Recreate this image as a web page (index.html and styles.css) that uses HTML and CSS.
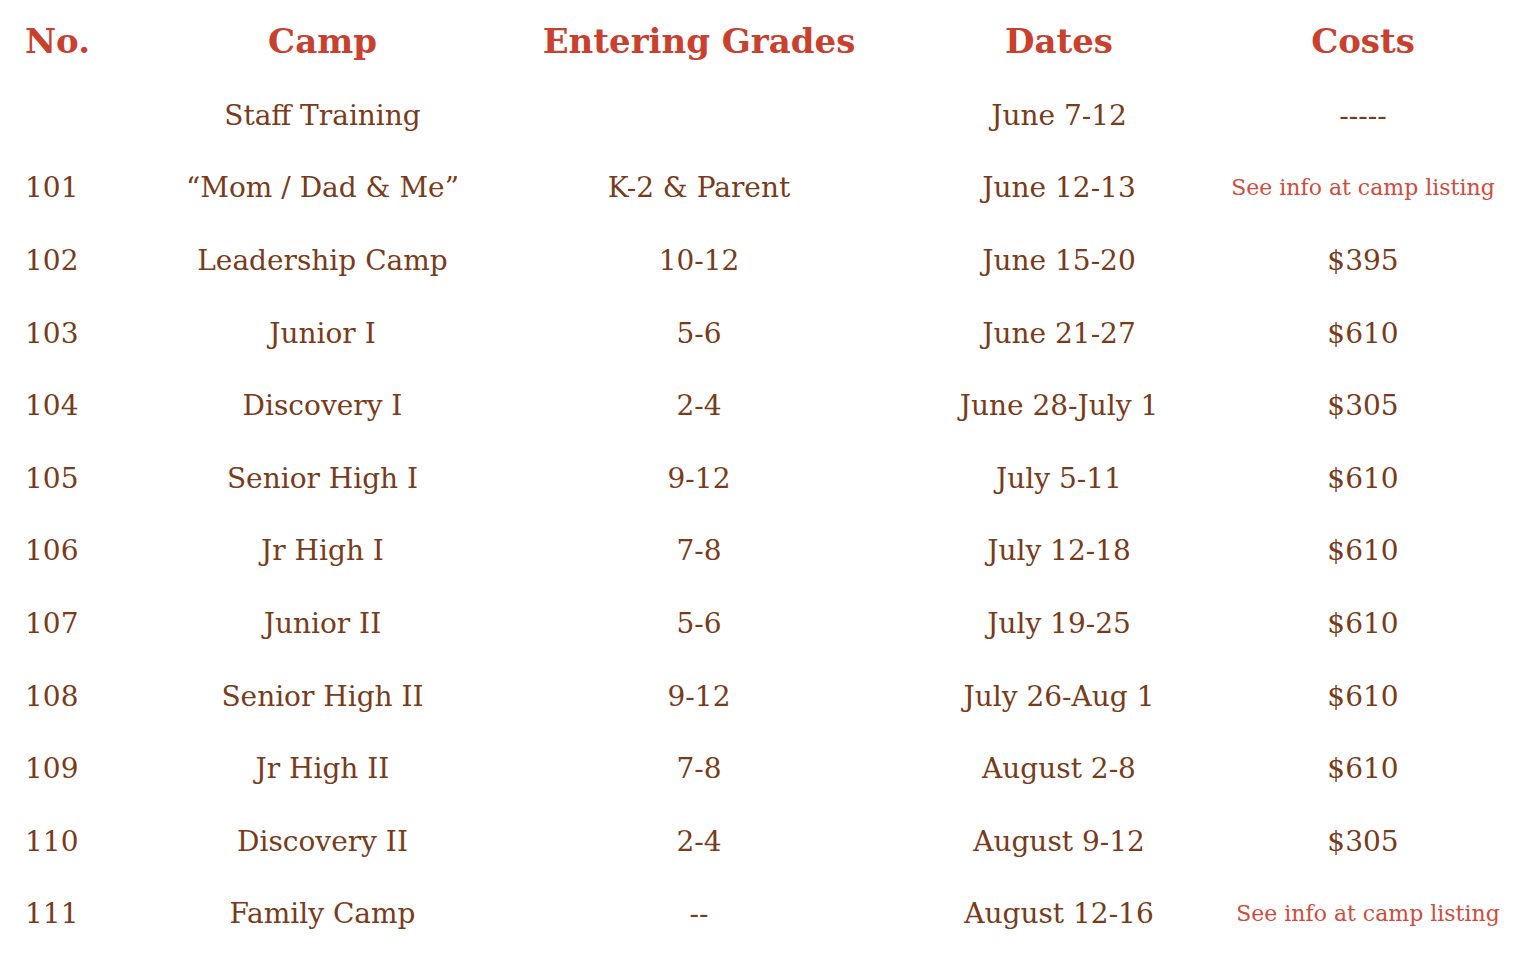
FILE: index.html
```html
<!DOCTYPE html>
<html>
<head>
<meta charset="utf-8">
<link rel="stylesheet" href="styles.css">
</head>
<body>
<div class="table">
  <div class="row head">
    <div class="c no">No.</div><div class="c">Camp</div><div class="c">Entering Grades</div><div class="c">Dates</div><div class="c">Costs</div>
  </div>
  <div class="row">
    <div class="c no"></div><div class="c">Staff Training</div><div class="c"></div><div class="c">June 7-12</div><div class="c">-----</div>
  </div>
  <div class="row">
    <div class="c no">101</div><div class="c">“Mom / Dad &amp; Me”</div><div class="c">K-2 &amp; Parent</div><div class="c">June 12-13</div><div class="c info">See info at camp listing</div>
  </div>
  <div class="row">
    <div class="c no">102</div><div class="c">Leadership Camp</div><div class="c">10-12</div><div class="c">June 15-20</div><div class="c">$395</div>
  </div>
  <div class="row">
    <div class="c no">103</div><div class="c">Junior I</div><div class="c">5-6</div><div class="c">June 21-27</div><div class="c">$610</div>
  </div>
  <div class="row">
    <div class="c no">104</div><div class="c">Discovery I</div><div class="c">2-4</div><div class="c">June 28-July 1</div><div class="c">$305</div>
  </div>
  <div class="row">
    <div class="c no">105</div><div class="c">Senior High I</div><div class="c">9-12</div><div class="c">July 5-11</div><div class="c">$610</div>
  </div>
  <div class="row">
    <div class="c no">106</div><div class="c">Jr High I</div><div class="c">7-8</div><div class="c">July 12-18</div><div class="c">$610</div>
  </div>
  <div class="row">
    <div class="c no">107</div><div class="c">Junior II</div><div class="c">5-6</div><div class="c">July 19-25</div><div class="c">$610</div>
  </div>
  <div class="row">
    <div class="c no">108</div><div class="c">Senior High II</div><div class="c">9-12</div><div class="c">July 26-Aug 1</div><div class="c">$610</div>
  </div>
  <div class="row">
    <div class="c no">109</div><div class="c">Jr High II</div><div class="c">7-8</div><div class="c">August 2-8</div><div class="c">$610</div>
  </div>
  <div class="row">
    <div class="c no">110</div><div class="c">Discovery II</div><div class="c">2-4</div><div class="c">August 9-12</div><div class="c">$305</div>
  </div>
  <div class="row">
    <div class="c no">111</div><div class="c">Family Camp</div><div class="c">--</div><div class="c">August 12-16</div><div class="c info last">See info at camp listing</div>
  </div>
</div>
</body>
</html>
```
FILE: styles.css
```css
html, body {
  margin: 0;
  padding: 0;
  background: #ffffff;
}
body {
  font-family: "DejaVu Serif", "Liberation Serif", serif;
  color: #7a3b1a;
  width: 1536px;
  height: 969px;
  overflow: hidden;
}
.table {
  display: flex;
  flex-direction: column;
  padding-top: 5px;
}
.row {
  display: grid;
  grid-template-columns: 145px 355px 398px 322px 286px;
  height: 72.6px;
  align-items: center;
  font-size: 28px;
  padding-top: 3px;
  box-sizing: border-box;
}
.c {
  text-align: center;
  white-space: nowrap;
}
.c.no {
  text-align: left;
  padding-left: 25px;
}
.head {
  font-weight: bold;
  color: #c9412e;
  font-size: 34px;
  padding-top: 0;
}
.info {
  color: #d24b3a;
  font-size: 22px;
}
.info.last {
  padding-left: 10px;
}
```
